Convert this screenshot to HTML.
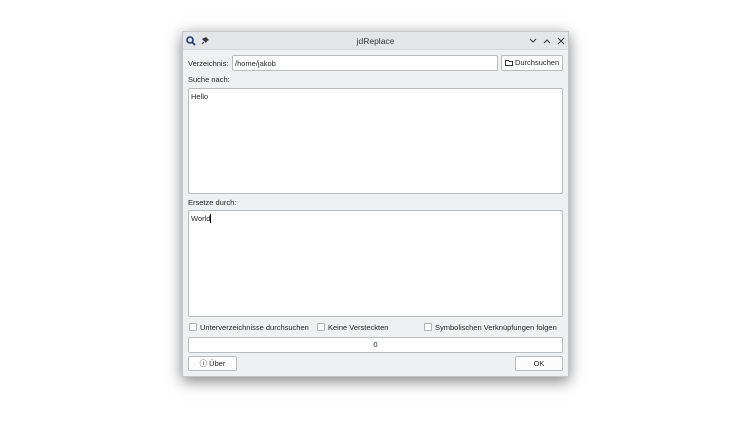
<!DOCTYPE html>
<html><head><style>
*{box-sizing:border-box;margin:0;padding:0}
body{width:752px;height:423px;background:#fff;font-family:"Liberation Sans",sans-serif;font-size:7.5px;color:#232629;position:relative;overflow:hidden}
.win{position:absolute;left:182px;top:31px;width:387px;height:346px;background:#eff0f1;box-shadow:0 4px 14px rgba(0,0,0,.5);border:1px solid #c4c6c8}
.tb{position:absolute;left:0;top:0;width:100%;height:18px;background:#e3e5e7;border-bottom:1px solid #d4d6d8}
.tb .t{position:absolute;left:0;right:0;top:4px;text-align:center;font-size:8.5px;color:#31363b}
.a{position:absolute}
.box{position:absolute;background:#fff;border:1px solid #b9bcbe;border-radius:2px}
.btn{position:absolute;background:#fcfcfc;border:1px solid #b9bcbe;border-radius:2px;text-align:center;line-height:13px}
.cb{position:absolute;width:8px;height:8px;border:1px solid #b0b3b6;background:#fff;border-radius:1px}
</style></head><body>
<div class="win">
 <div class="tb">
  <svg class="a" style="left:3px;top:4px" width="10" height="10" viewBox="0 0 10 10"><circle cx="4" cy="4" r="3" fill="none" stroke="#1d3a7a" stroke-width="1.6"/><path d="M6 6l3 3" stroke="#1d3a7a" stroke-width="1.8"/></svg>
  <svg class="a" style="left:18px;top:4px" width="9" height="9" viewBox="0 0 9 9"><path d="M5 1l3 3-2 1-1 2-4-4 2-1z" fill="#31363b"/><path d="M3 6l-2 2" stroke="#31363b"/></svg>
  <div class="t">jdReplace</div>
  <svg class="a" style="left:346px;top:6px" width="8" height="6"><path d="M1 1l3 3 3-3" fill="none" stroke="#31363b"/></svg>
  <svg class="a" style="left:360px;top:6px" width="8" height="6"><path d="M1 5l3-3 3 3" fill="none" stroke="#31363b"/></svg>
  <svg class="a" style="left:374px;top:5px" width="8" height="8"><path d="M1 1l6 6M7 1l-6 6" stroke="#31363b"/></svg>
 </div>
 <div class="a" style="left:5px;top:27px">Verzeichnis:</div>
 <div class="box" style="left:49px;top:23px;width:266px;height:16px"><span class="a" style="left:2px;top:3px">/home/jakob</span></div>
 <div class="btn" style="left:318px;top:23px;width:62px;height:16px;line-height:14px"><svg width="8" height="7" style="vertical-align:-1px"><path d="M.5 1.5h3l1 1h3v4h-7z" fill="none" stroke="#31363b"/></svg> Durchsuchen</div>
 <div class="a" style="left:5px;top:43px">Suche nach:</div>
 <div class="box" style="left:5px;top:56px;width:375px;height:106px"><span class="a" style="left:2px;top:3px">Hello</span></div>
 <div class="a" style="left:5px;top:166px">Ersetze durch:</div>
 <div class="box" style="left:5px;top:178px;width:375px;height:107px"><span class="a" style="left:2px;top:3px">World<span style="border-left:1px solid #000">&#8203;</span></span></div>
 <div class="cb" style="left:6px;top:291px"></div><div class="a" style="left:17px;top:291px">Unterverzeichnisse durchsuchen</div>
 <div class="cb" style="left:134px;top:291px"></div><div class="a" style="left:145px;top:291px">Keine Versteckten</div>
 <div class="cb" style="left:241px;top:291px"></div><div class="a" style="left:252px;top:291px">Symbolischen Verknüpfungen folgen</div>
 <div class="box" style="left:5px;top:305px;width:375px;height:16px;text-align:center;line-height:14px">0</div>
 <div class="btn" style="left:5px;top:324px;width:49px;height:15px">&#9432; Über</div>
 <div class="btn" style="left:332px;top:324px;width:48px;height:15px">OK</div>
</div>
</body></html>
